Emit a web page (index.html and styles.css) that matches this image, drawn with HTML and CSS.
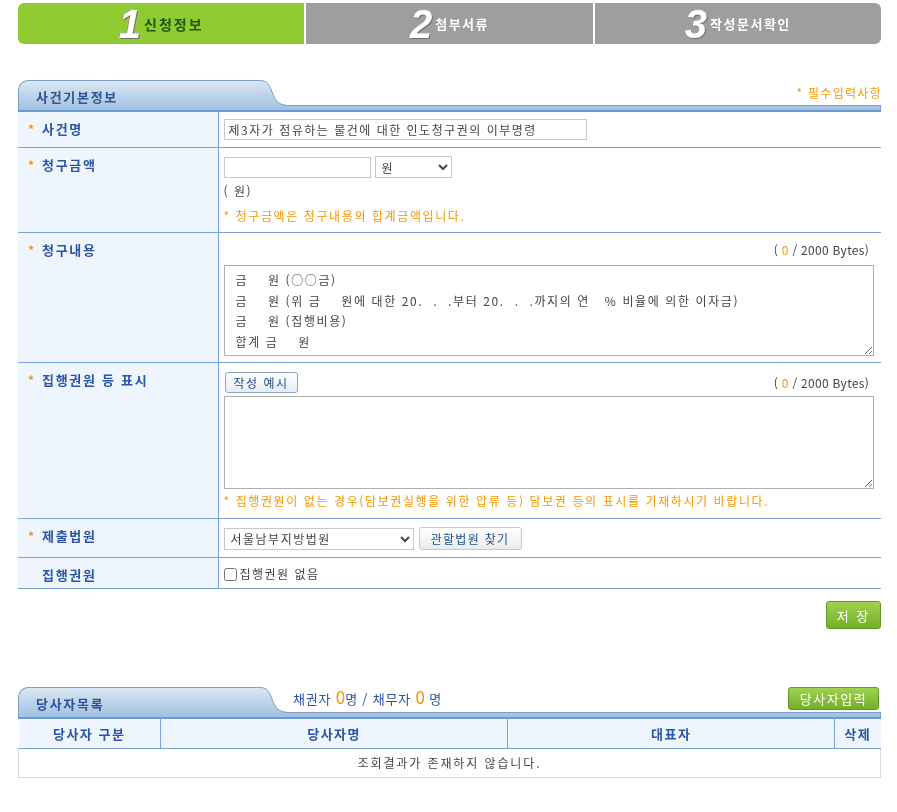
FILE: index.html
```html
<!DOCTYPE html>
<html lang="ko">
<head>
<meta charset="utf-8">
<title>신청정보</title>
<link rel="stylesheet" href="styles.css">
</head>
<body>
<div class="wrap">
  <div class="steps">
    <div class="step on"><span class="num">1</span><span class="lbl">신청정보</span></div>
    <div class="step"><span class="num">2</span><span class="lbl">첨부서류</span></div>
    <div class="step"><span class="num">3</span><span class="lbl">작성문서확인</span></div>
  </div>

  <div class="sec-head first">
    <div class="tab">사건기본정보</div>
    <svg class="curve" width="32" height="30" viewBox="0 0 32 30">
      <defs>
        <linearGradient id="g1" x1="0" y1="0" x2="0" y2="30" gradientUnits="userSpaceOnUse">
          <stop offset="0" stop-color="#dbe7f3"/>
          <stop offset="1" stop-color="#a1c0e1"/>
        </linearGradient>
      </defs>
      <path d="M0,0 H2 C10,0 12,6 14,12 C17,21 22,25 30,25 H32 V30 H0 Z" fill="url(#g1)"/>
      <path d="M0,0.5 H2 C10,0.5 12,6 14,12 C17,21 22,25.5 30,25.5 H32" fill="none" stroke="#7b9fc9" stroke-width="1"/>
    </svg>
    <div class="rest">
      <div class="info right"><span class="req">* 필수입력사항</span></div>
      <div class="bar"></div>
    </div>
  </div>

  <table class="form">
    <colgroup><col class="c-label"><col></colgroup>
    <tr class="r1">
      <th><span class="star">*</span>사건명</th>
      <td><input class="txt title" type="text" value="제3자가 점유하는 물건에 대한 인도청구권의 이부명령"></td>
    </tr>
    <tr class="r2">
      <th><span class="star">*</span>청구금액</th>
      <td>
        <div class="line"><input class="txt amount" type="text"><select class="sel unit"><option>원</option></select></div>
        <div class="unit-txt">( 원)</div>
        <div class="note n2">* 청구금액은 청구내용의 합계금액입니다.</div>
      </td>
    </tr>
    <tr class="r3">
      <th><span class="star">*</span>청구내용</th>
      <td>
        <div class="bytes">( <span class="o">0</span> / 2000 Bytes)</div>
        <textarea class="area a1">금    원 (○○금)
금    원 (위 금    원에 대한 20.  .  .부터 20.  .  .까지의 연   % 비율에 의한 이자금)
금    원 (집행비용)
합계 금    원</textarea>
      </td>
    </tr>
    <tr class="r4">
      <th><span class="star">*</span>집행권원 등 표시</th>
      <td>
        <div class="line between"><button class="btn-ex" type="button">작성 예시</button><span class="bytes">( <span class="o">0</span> / 2000 Bytes)</span></div>
        <textarea class="area a2"></textarea>
        <div class="note n4">* 집행권원이 없는 경우(담보권실행을 위한 압류 등) 담보권 등의 표시를 기재하시기 바랍니다.</div>
      </td>
    </tr>
    <tr class="r5">
      <th><span class="star">*</span>제출법원</th>
      <td>
        <div class="line"><select class="sel court"><option>서울남부지방법원</option></select><button class="btn-find" type="button">관할법원 찾기</button></div>
      </td>
    </tr>
    <tr class="r6">
      <th class="nostar">집행권원</th>
      <td><label class="chk"><input type="checkbox">집행권원 없음</label></td>
    </tr>
  </table>

  <div class="actions"><button class="btn-green save" type="button">저 장</button></div>

  <div class="sec-head second">
    <div class="tab">당사자목록</div>
    <svg class="curve" width="32" height="30" viewBox="0 0 32 30">
      <defs>
        <linearGradient id="g2" x1="0" y1="0" x2="0" y2="30" gradientUnits="userSpaceOnUse">
          <stop offset="0" stop-color="#dbe7f3"/>
          <stop offset="1" stop-color="#a1c0e1"/>
        </linearGradient>
      </defs>
      <path d="M0,0 H2 C10,0 12,6 14,12 C17,21 22,25 30,25 H32 V30 H0 Z" fill="url(#g2)"/>
      <path d="M0,0.5 H2 C10,0.5 12,6 14,12 C17,21 22,25.5 30,25.5 H32" fill="none" stroke="#7b9fc9" stroke-width="1"/>
    </svg>
    <div class="rest">
      <div class="info between">
        <span class="count">채권자 <b>0</b>명 / 채무자 <b>0</b> 명</span>
        <button class="btn-green add" type="button">당사자입력</button>
      </div>
      <div class="bar"></div>
    </div>
  </div>

  <table class="list">
    <colgroup><col class="l1"><col class="l2"><col class="l3"><col class="l4"></colgroup>
    <tr><th>당사자 구분</th><th>당사자명</th><th>대표자</th><th>삭제</th></tr>
    <tr><td colspan="4">조회결과가 존재하지 않습니다.</td></tr>
  </table>
</div>
</body>
</html>
```

FILE: styles.css
```css
* { box-sizing: border-box; }
body {
  margin: 0;
  padding: 3px 0 0 18px;
  font-family: "Noto Sans CJK KR", sans-serif;
  font-size: 12px;
  color: #444;
  background: #fff;
}
.wrap { width: 863px; }

/* steps */
.steps { display: flex; gap: 2px; height: 41px; }
.step {
  flex: 1;
  display: flex;
  align-items: center;
  justify-content: center;
  background: #9e9e9e;
  color: #fff;
  font-weight: bold;
  font-size: 13px;
  letter-spacing: 1.5px;
}
.step:first-child { border-radius: 6px 0 0 6px; background: #8fcb31; }
.step:last-child { border-radius: 0 6px 6px 0; }
.num {
  font-family: "Liberation Sans", sans-serif;
  font-style: italic;
  font-weight: bold;
  font-size: 40px;
  line-height: 1;
  color: #fff;
  letter-spacing: 0;
  margin-right: 3px;
  text-shadow: 1px 1px 0 #707070, -1px 0 0 #9a9a9a, 0 -1px 0 #b0b0b0;
}
.step.on .lbl { color: #1d5a14; font-size: 14px; letter-spacing: 2px; }

/* section header */
.sec-head {
  display: flex;
  height: 32px;
  border-bottom: 2px solid #6a9ad2;
}
.sec-head.first { margin-top: 36px; }
.sec-head.second { margin-top: 58px; }
.tab {
  width: 240px;
  height: 30px;
  border: 1px solid #7b9fc9;
  border-right: 0;
  border-bottom: 0;
  border-radius: 10px 0 0 0;
  background: linear-gradient(#dbe7f3, #a1c0e1);
  padding-left: 17px;
  font-weight: bold;
  font-size: 13px;
  letter-spacing: 1.7px;
  color: #2c5596;
  line-height: 31px;
}
.curve { display: block; flex: none; }
.rest { flex: 1; display: flex; flex-direction: column; }
.info { flex: 1; display: flex; }
.info.right { justify-content: flex-end; align-items: center; }
.info.between { justify-content: space-between; align-items: flex-start; padding-left: 3px; padding-right: 2px; }
.bar {
  height: 5px;
  border-top: 1px solid #7b9fc9;
  border-right: 1px solid #7b9fc9;
  background: linear-gradient(#a9c6e4, #a1c0e1);
}
.req { color: #f39800; font-size: 12px; letter-spacing: 1.3px; margin-right: -1px; }
.count { color: #2d55a0; font-size: 13px; line-height: 20px; letter-spacing: 0.8px; }
.count b { color: #f39800; font-weight: normal; font-size: 17px; letter-spacing: 0; }

/* form table */
.form { width: 100%; border-collapse: collapse; }
.c-label { width: 200px; }
.form th {
  background: #eff5fc;
  border-bottom: 1px solid #79a3dd;
  border-right: 1px solid #79a3dd;
  text-align: left;
  vertical-align: top;
  padding: 9px 0 0 10px;
  font-weight: bold;
  font-size: 13px;
  letter-spacing: 1.7px;
  color: #2a55a6;
  line-height: 16px;
}
.form th.nostar { padding-left: 24px; }
.star { display: inline-block; width: 14px; color: #f39800; font-size: 12px; letter-spacing: 0; }
.form td {
  border-bottom: 1px solid #79a3dd;
  vertical-align: top;
  padding: 6px 5px;
  line-height: 16px;
  letter-spacing: 1.5px;
}
.r1 td { padding: 7px 5px 7px; }
.r2 td { padding: 8px 5px 8px; }
.r3 td { padding: 9px 5px 6px; }
.r4 td { padding: 9px 5px 9px; }
.r5 td { padding: 8px 5px 7px; }
.r6 td { padding: 7px 5px 5px; }

.line { display: flex; align-items: center; }
.line.between { justify-content: space-between; }
.txt {
  display: block;
  height: 21px;
  border: 1px solid #c8c8c8;
  padding: 0 4px;
  font: inherit;
  color: #444;
  letter-spacing: 1.5px;
  background: #fff;
}
.title { width: 363px; }
.amount { width: 147px; }
.sel {
  height: 22px;
  border: 1px solid #c8c8c8;
  font: inherit;
  color: #444;
  background: #fff;
  padding: 0 2px;
  letter-spacing: 1.5px;
}
.unit { width: 77px; margin-left: 4px; }
.court { width: 190px; }
.unit-txt { margin-top: 5px; }
.note { color: #f39800; letter-spacing: 1.6px; }
.n2 { margin-top: 9px; }
.n4 { margin-top: 4px; }
.bytes { text-align: right; padding-right: 7px; letter-spacing: 0.3px; }
.o { color: #f39800; }
.area {
  display: block;
  width: 650px;
  border: 1px solid #b0b0b0;
  padding: 4px 11px 4px;
  font: inherit;
  color: #444;
  line-height: 20.5px;
  letter-spacing: 1.6px;
}
.a1 { margin-top: 7px; height: 91px; }
.a2 { margin-top: 3px; height: 93px; }
.btn-ex {
  height: 21px;
  width: 73px;
  margin-left: 1px;
  padding: 0;
  border: 1px solid #8aa6c6;
  border-radius: 3px;
  background: linear-gradient(#ffffff, #e6edf5);
  color: #1d4f91;
  font: inherit;
  letter-spacing: 1.5px;
}
.btn-find {
  height: 23px;
  width: 103px;
  margin-left: 5px;
  padding: 0;
  border: 1px solid #c8c8c8;
  border-radius: 3px;
  background: linear-gradient(#ffffff, #ebebeb);
  color: #1d4f91;
  font: inherit;
  letter-spacing: 1.3px;
}
.chk { display: flex; align-items: center; line-height: 18px; }
.chk input { margin: 0 3px 0 0; width: 13px; height: 13px; }

/* buttons */
.actions { display: flex; justify-content: flex-end; margin-top: 12px; }
.btn-green {
  border: 1px solid #5d9a1f;
  border-radius: 3px;
  background: linear-gradient(#9fd24f, #74ae2b);
  color: #fff;
  font-family: inherit;
  font-size: 13px;
  padding: 0;
}
.save { width: 55px; height: 28px; letter-spacing: 2px; }
.add { width: 91px; height: 23px; letter-spacing: 1.5px; }

/* list table */
.list { width: 100%; border-collapse: collapse; }
.l1 { width: 142px; }
.l2 { width: 348px; }
.l3 { width: 327px; }
.l4 { width: 46px; }
.list th {
  height: 29px;
  background: #eff5fc;
  border-bottom: 1px solid #79a3dd;
  border-right: 1px solid #79a3dd;
  font-weight: bold;
  font-size: 13px;
  letter-spacing: 1.5px;
  color: #2a55a6;
  padding: 0;
}
.list th:last-child { border-right: 0; }
.list td {
  height: 29px;
  text-align: center;
  border: 1px solid #d9d9d9;
  border-top: 0;
  letter-spacing: 1.9px;
  padding: 0;
}
```
